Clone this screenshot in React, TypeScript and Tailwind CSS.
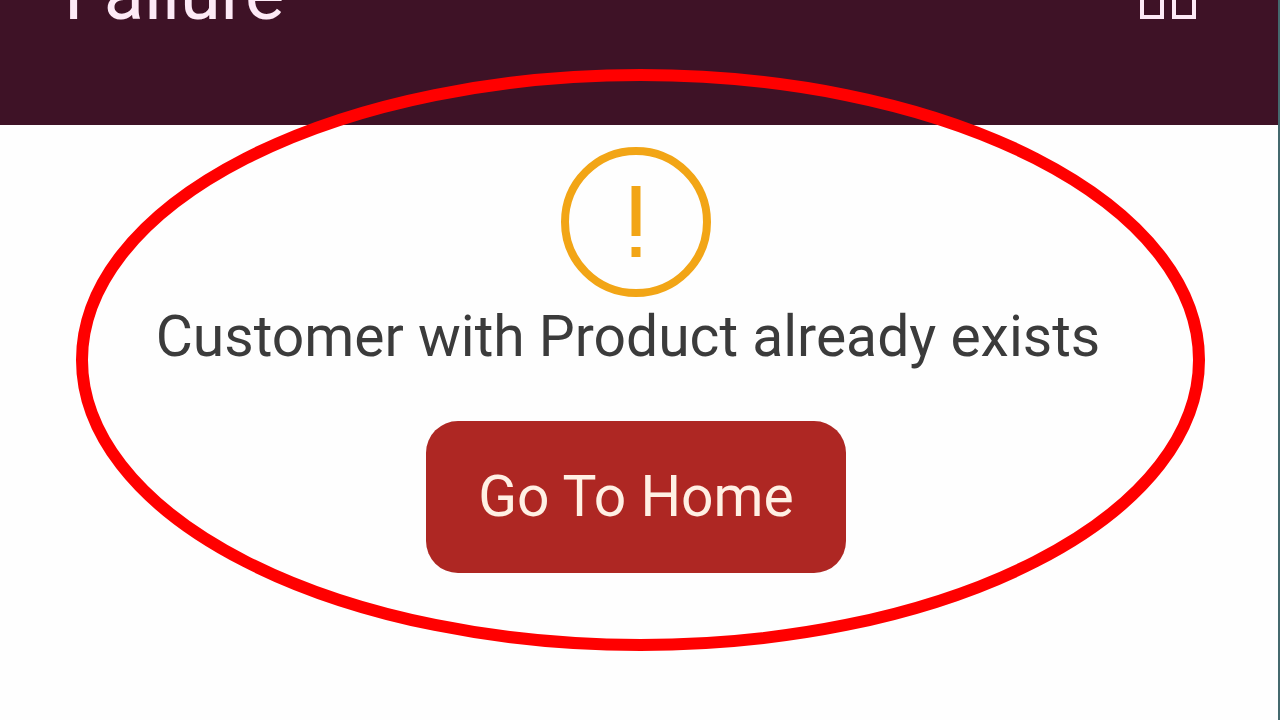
function HomeIcon() {
  return (
    <svg viewBox="0 0 24 24" className="size-24" fill="none" stroke="currentColor" strokeWidth={1} aria-hidden="true">
      <path d="M12 3.7 3.3 11.5h2.2v8h5v-6h3v6h5v-8h2.2z" />
    </svg>
  );
}

function WarningIcon() {
  return (
    <svg viewBox="0 0 150 150" className="size-[150px]" fill="none" aria-hidden="true">
      <circle cx="75" cy="75" r="71" stroke="#f2a516" strokeWidth={8} />
      <path d="M70.5 39h9v50h-9zM70.5 100h9v10h-9z" fill="#f2a516" />
    </svg>
  );
}

export default function App() {
  return (
    <div className="relative flex min-h-screen flex-col overflow-hidden bg-[#fefefe] font-[Roboto,sans-serif]">
      <div className="flex flex-1 flex-col border-r-2 border-[#44696e]">
        {/* app bar, scrolled partly out of view */}
        <header className="-mt-16 flex h-[189px] items-start justify-between bg-[#3e1226] pr-[62px] pl-16 text-[#fdeaf6]">
          <h1 className="pt-5 text-[74px] leading-[76px]">Failure</h1>
          <a href="#home" aria-label="Home" className="pt-[3px]">
            <HomeIcon />
          </a>
        </header>

        <main className="flex flex-col items-center pt-[22px] pr-1.5 text-center">
          <WarningIcon />
          <p className="pt-1 pr-4 text-[57px] leading-[72px] text-[#3b3b3b]">Customer with Product already exists</p>
          <button type="button" className="mt-12 rounded-[32px] bg-[#ae2723] px-[52px] py-10 text-[57px] leading-[72px] text-[#fff0e4]">
            Go To Home
          </button>
        </main>
      </div>

      <svg
        viewBox="0 0 1280 720"
        preserveAspectRatio="none"
        className="pointer-events-none absolute top-0 left-0 h-full w-full"
        fill="none"
        aria-hidden="true"
      >
        <ellipse cx="640.5" cy="360" rx="558.5" ry="285" stroke="#ff0000" strokeWidth={12} />
      </svg>
    </div>
  );
}
